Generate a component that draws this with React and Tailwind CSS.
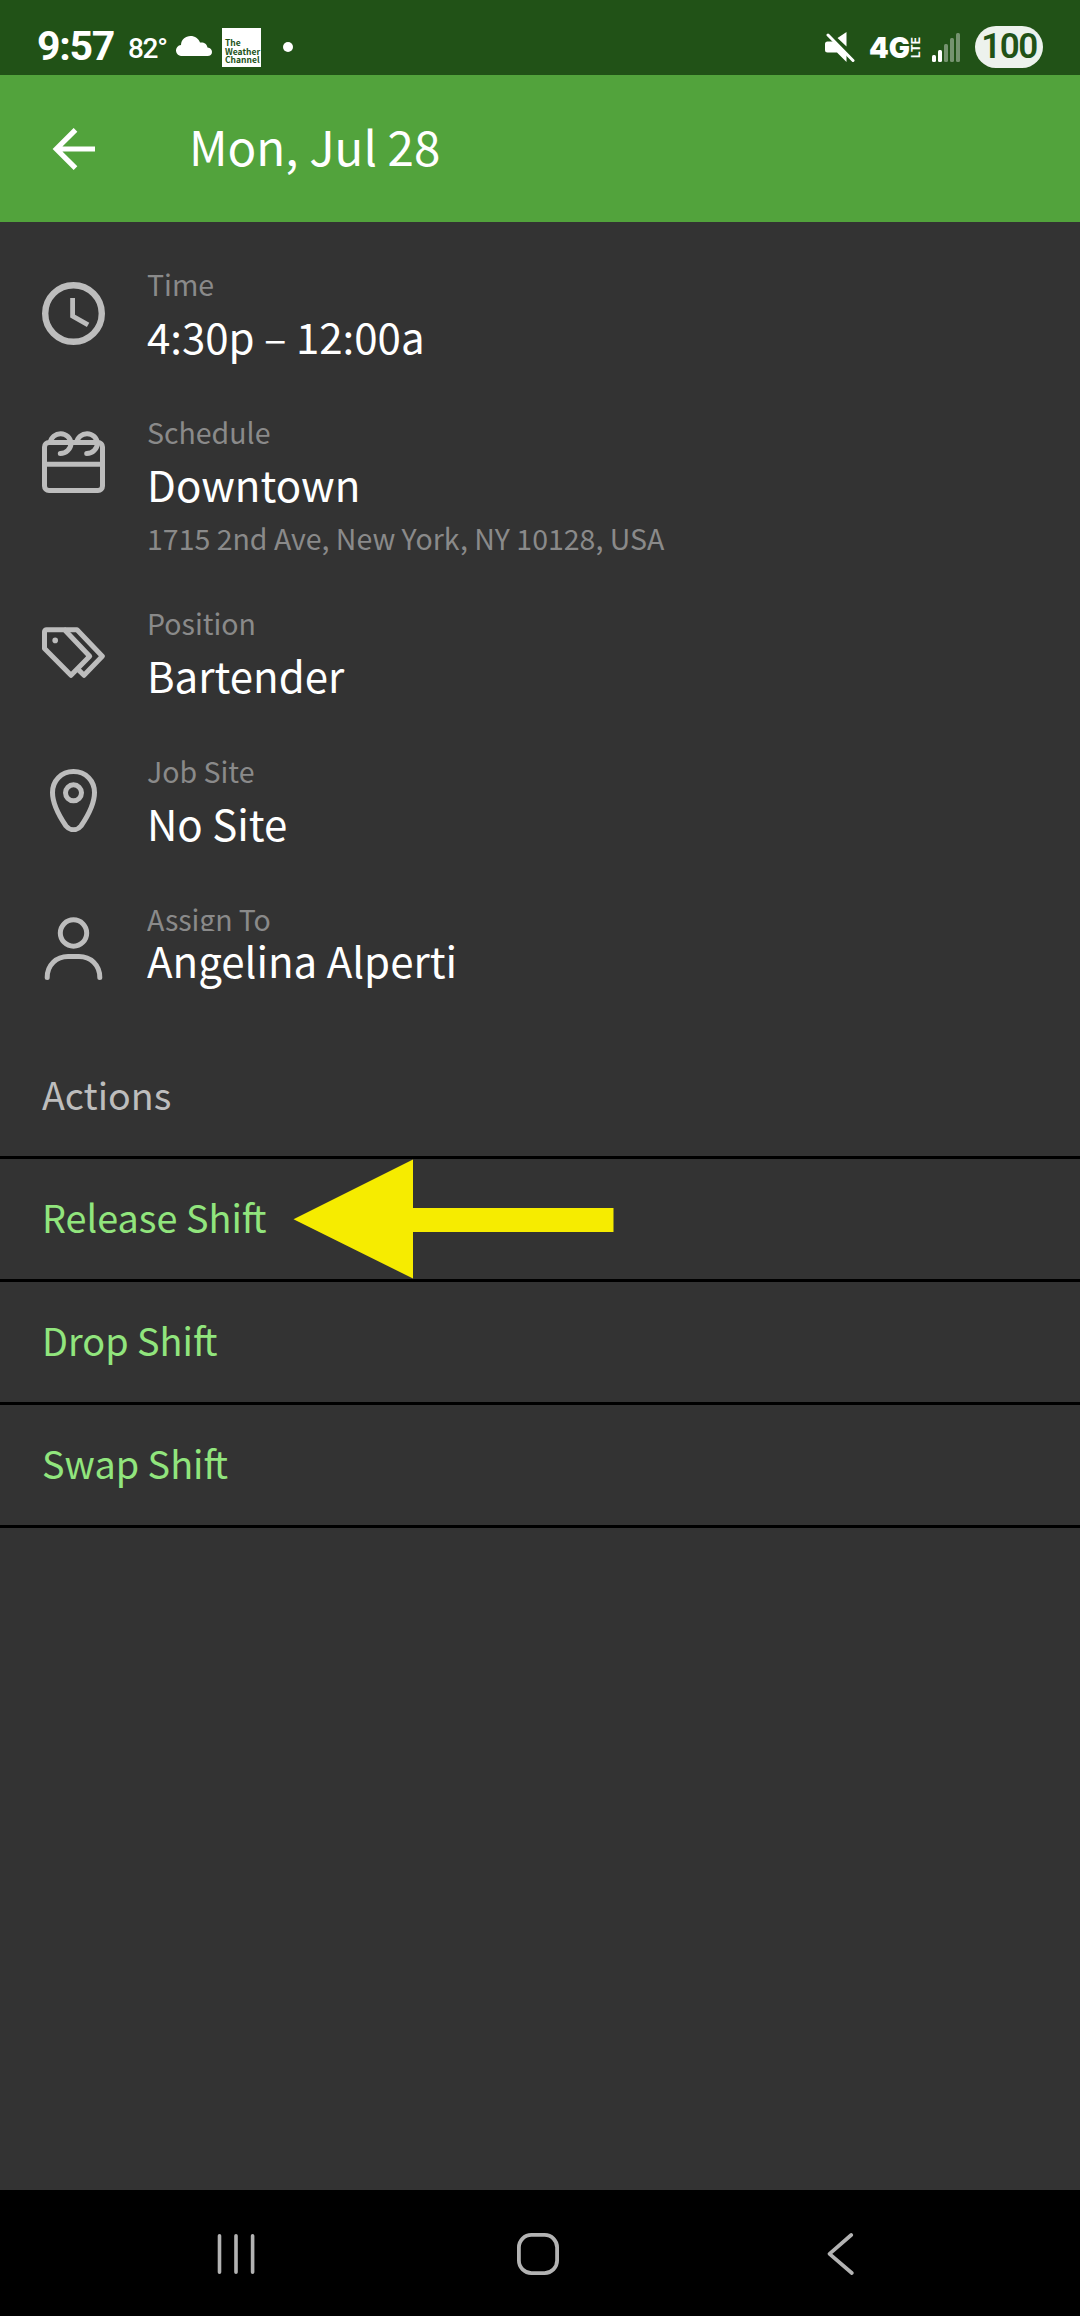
import { useState } from "react";

const ICON = "#bdbdbd";

const ClockIcon = () => (
  <svg width="63" height="63" viewBox="0 0 63 63" fill="none" stroke={ICON}>
    <circle cx="31.5" cy="31.5" r="28.3" strokeWidth="6.4" />
    <path d="M30.6 16v18l15.5 8.8" strokeWidth="4.8" />
  </svg>
);

const CalendarIcon = () => (
  <svg width="63" height="63" viewBox="0 0 63 63" fill="none" stroke={ICON} strokeWidth="5">
    <rect x="2.5" y="12.5" width="58" height="48" rx="4.5" />
    <path d="M2.5 34.3h58" />
    <path d="M8.2 12.5A10.5 10.5 0 0 1 29 13C29 19 24 23.6 18.3 23.6" strokeLinecap="round" />
    <path d="M34.6 12.5A10.5 10.5 0 0 1 55.4 13C55.4 19 50.4 23.6 44.7 23.6" strokeLinecap="round" />
  </svg>
);

const TagsIcon = () => (
  <svg width="63" height="63" viewBox="0 0 63 63" fill="none" stroke={ICON} strokeWidth="5" strokeLinejoin="round">
    <path d="M4.5 8.7h18l25.2 26.6L29 54.3 2.5 27.4V10.7a2 2 0 0 1 2-2z" />
    <path d="M22.5 8.7H35l25.3 26.6L42 54.3l-5.5-5.4" />
    <circle cx="13.2" cy="19.4" r="2.8" fill={ICON} stroke="none" />
  </svg>
);

const PinIcon = () => (
  <svg width="63" height="63" viewBox="0 0 63 63" fill="none" stroke={ICON} strokeWidth="5">
    <path d="M31.5 2.5C19 2.5 10.5 12 10.5 23.5c0 12 7 24 13.5 33.5 4 5 11 5 15 0 6.5-9.5 13.5-21.5 13.5-33.5C52.5 12 44 2.5 31.5 2.5z" />
    <circle cx="31.5" cy="23.8" r="8" />
  </svg>
);

const PersonIcon = () => (
  <svg width="63" height="63" viewBox="0 0 63 63" fill="none" stroke={ICON} strokeWidth="5" strokeLinecap="round">
    <circle cx="31.5" cy="16" r="13.2" />
    <path d="M5.2 60.5C5.2 48 14.5 39.5 26 39.5h11c11.5 0 20.8 8.5 20.8 21" />
  </svg>
);

const DETAILS = [
  { key: "time", label: "Time", value: "4:30p – 12:00a", icon: ClockIcon },
  { key: "schedule", label: "Schedule", value: "Downtown", note: "1715 2nd Ave, New York, NY 10128, USA", icon: CalendarIcon },
  { key: "position", label: "Position", value: "Bartender", icon: TagsIcon },
  { key: "site", label: "Job Site", value: "No Site", icon: PinIcon },
  { key: "assign", label: "Assign To", value: "Angelina Alperti", icon: PersonIcon, tight: true },
];

const ACTIONS = ["Release", "Drop", "Swap"];

const StatusBar = () => (
  <div className="h-[75px] bg-[#215217] flex items-start text-white font-[Roboto,sans-serif]">
    <span className="ml-[37px] mt-[22px] w-[77px] text-[41px] leading-[48px] font-bold tracking-[-1.3px] whitespace-nowrap">9:57</span>
    <span className="ml-[14px] mt-[33px] w-[40px] text-[28px] leading-[32px] font-medium tracking-[-1.3px] whitespace-nowrap">82°</span>
    <svg className="ml-[8px] mt-[36px]" width="37" height="20" viewBox="0 0 37 20" fill="#fff">
      <path d="M6 20a5.5 5.5 0 0 1-1-11C5 3.5 9.5 0 14.5 0c4.5 0 8 2.5 9.5 6.5 4-.5 7 1.5 7.5 5 3 .5 4.5 2.2 4.5 4.5 0 2.5-1.8 4-4.5 4z" />
    </svg>
    <div className="ml-[9px] mt-[28px] w-[39px] h-[39px] bg-white pl-[3px] pt-[10px] text-[8.5px] leading-[8.7px] font-bold text-[#215217] font-['Noto_Sans_CJK_SC',sans-serif]">
      <p>The</p>
      <p>Weather</p>
      <p>Channel</p>
    </div>
    <div className="ml-[22px] mt-[42px] size-[10px] rounded-full bg-white" />

    <svg className="ml-auto mt-[32px]" width="30" height="31" viewBox="0 0 30 31" fill="#fff">
      <path d="M21.5 0v14.5L12.5 6zM2.5 9.5h6l13 13V30l-9.5-9.5H2.5A2.5 2.5 0 0 1 0 18v-6a2.5 2.5 0 0 1 2.5-2.5z" />
      <path d="M3 3l25 25.5" stroke="#fff" strokeWidth="3" strokeLinecap="round" />
    </svg>
    {/* Network type */}
    <svg className="ml-[15px] mt-[36px] overflow-visible" width="50" height="23" viewBox="0 0 50 23" fill="#fff">
      <text x="-1" y="22" textLength="41" lengthAdjust="spacingAndGlyphs" className="text-[28.5px] font-black font-[Inter,sans-serif]">4G</text>
      <text transform="translate(49.8 22) rotate(-90)" textLength="21" lengthAdjust="spacingAndGlyphs" className="text-[12px] font-bold font-[Inter,sans-serif]">LTE</text>
    </svg>
    <svg className="ml-[12px] mt-[33px]" width="28" height="29" viewBox="0 0 28 29" fill="#fff">
      <rect x="0" y="22" width="4" height="7" rx="1.5" />
      <rect x="6" y="17" width="4" height="12" rx="1.5" />
      <rect x="12" y="11" width="4" height="18" rx="1.5" opacity=".38" />
      <rect x="18" y="5" width="4" height="24" rx="1.5" opacity=".38" />
      <rect x="24" y="0" width="4" height="29" rx="1.5" opacity=".38" />
    </svg>
    <div className="ml-[15px] mr-[37px] mt-[26px] w-[68px] h-[42px] rounded-full bg-[#edf2ed] flex items-center justify-center pb-[1px] text-[35px] leading-[41px] font-semibold tracking-[-1.5px] text-[#215217]">100</div>
  </div>
);

const DetailRow = ({ item }) => {
  const Icon = item.icon;
  return (
    <div className={`pl-[42px] flex items-start ${item.note ? "h-[191px]" : "h-[148px]"}`}>
      <div className="mt-[20px] w-[105px] shrink-0">
        <Icon />
      </div>
      <div className="whitespace-nowrap">
        <p className={`text-[28.5px] leading-[44px] text-[#8a8a8a] ${item.tight ? "h-[34px] overflow-hidden tracking-[-0.1px]" : "h-[44px]"}`}>{item.label}</p>
        <p className={`text-[42px] text-white ${item.tight ? "leading-[58px]" : "leading-[60px]"}`}>{item.value}</p>
        {item.note && <p className="mt-[2px] text-[28.5px] leading-[43px] text-[#8a8a8a]">{item.note}</p>}
      </div>
    </div>
  );
};

const NavBar = () => (
  <div className="h-[126px] bg-black flex items-start pt-[43px]">
    <svg className="ml-[217px]" width="38" height="42" viewBox="0 0 38 42" stroke="#b3b3b3" strokeWidth="3.6" strokeLinecap="round">
      <path d="M2.5 2.8v36.5M19 2.8v36.5M35.6 2.8v36.5" />
    </svg>
    <svg className="ml-[262px]" width="42" height="42" viewBox="0 0 42 42" fill="none" stroke="#b3b3b3" strokeWidth="3.8">
      <rect x="1.9" y="1.9" width="38.2" height="38.2" rx="12.5" />
    </svg>
    <svg className="ml-[268px]" width="27" height="42" viewBox="0 0 27 42" fill="none" stroke="#b3b3b3" strokeWidth="3.7" strokeLinecap="round" strokeLinejoin="round">
      <path d="M24.2 2L2.5 20.8 24.8 40" />
    </svg>
  </div>
);

export default function App() {
  const [selected, setSelected] = useState("Release");

  return (
    <div className="w-[1080px] h-[2316px] bg-[#333333] flex flex-col overflow-hidden font-['Noto_Sans_CJK_SC',sans-serif]">
      <StatusBar />

      {/* Header */}
      <div className="h-[147px] bg-[#52a33c] flex items-center">
        <svg className="ml-[52px]" width="44" height="42" viewBox="0 0 44 42" fill="none" stroke="#fff" strokeWidth="5.2">
          <path d="M23.5 1.8L4.3 21l19.2 19.2M4.3 21H43" />
        </svg>
        <h1 className="ml-[93px] text-[47.5px] leading-[60px] pb-[5px] text-white whitespace-nowrap">Mon, Jul 28</h1>
      </div>

      {/* Shift details */}
      <div className="pt-[40px]">
        {DETAILS.map((item) => (
          <DetailRow key={item.key} item={item} />
        ))}
      </div>

      {/* Actions */}
      <h2 className="pl-[42px] pt-[19px] h-[111px] text-[37.6px] leading-[60px] text-[#bdbdbd]">Actions</h2>
      <div className="border-t-[3px] border-black">
        {ACTIONS.map((action) => (
          <button
            key={action}
            onClick={() => setSelected(action)}
            className="relative w-full h-[123px] border-b-[3px] border-black flex items-center pl-[42px] pb-[4px] text-[37.8px] leading-[60px] text-[#91e57d]"
          >
            <span>
              {action} Shi<span className="tracking-[-2px]">f</span>t
            </span>
            {selected === action && (
              <svg className="absolute left-[293px] top-0" width="321" height="120" viewBox="0 0 321 120" fill="#f6ec00">
                <path d="M.5 60.3L120 .5V49h200.5v24H120v46.5z" />
              </svg>
            )}
          </button>
        ))}
      </div>

      <div className="flex-1" />
      <NavBar />
    </div>
  );
}
